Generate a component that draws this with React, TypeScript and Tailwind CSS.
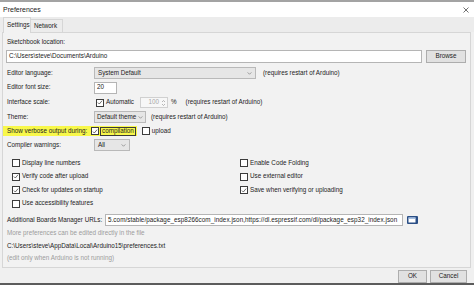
import React from "react";

function Box({ checked }: { checked?: boolean }) {
  return (
    <span className="w-[8px] h-[8px] border border-[#3c3c3c] bg-white flex items-center justify-center shrink-0">
      {checked && (
        <svg viewBox="0 0 8 8" className="w-[7px] h-[7px]">
          <path d="M1.2 4.1 L3.1 6 L6.8 1.5" fill="none" stroke="#2a2a2a" strokeWidth="0.9" />
        </svg>
      )}
    </span>
  );
}

function Chevron() {
  return (
    <svg viewBox="0 0 6 4" className="w-[5px] h-[3px] shrink-0">
      <path d="M0.5 0.5 L3 3 L5.5 0.5" fill="none" stroke="#6b6b6b" strokeWidth="0.8" />
    </svg>
  );
}

function Check({ label, checked }: { label: string; checked?: boolean }) {
  return (
    <div className="flex items-center gap-[2px]">
      <Box checked={checked} />
      <span>{label}</span>
    </div>
  );
}

export default function App() {
  return (
    <div className="w-[474px] h-[285px] overflow-hidden whitespace-nowrap bg-[#f0f0f0] flex flex-col font-['Liberation_Sans',Arial,sans-serif] text-[6.3px] leading-none text-[#222]">
      <div className="h-[2px] bg-[#a3a3a3]" />

      {/* title bar */}
      <div className="h-[15px] bg-white flex items-center justify-between pl-[3px] pr-[5px]">
        <span className="text-[7px]">Preferences</span>
        <svg viewBox="0 0 6 6" className="w-[6px] h-[6px]">
          <path d="M0.5 0.5 L5.5 5.5 M5.5 0.5 L0.5 5.5" stroke="#333" strokeWidth="0.7" />
        </svg>
      </div>

      {/* tabs */}
      <div className="h-[15px] flex items-end pl-[3px] bg-[#ececec]">
        <div className="relative z-10 -mb-[1px] h-[16px] w-[28px] bg-[#f2f2f2] border-l border-t border-r border-[#d6d6d6] flex items-center pl-[3px]">
          Settings
        </div>
        <div className="h-[13px] w-[32px] bg-[#ececec] border-t border-r border-[#d6d6d6] flex items-center pl-[3px]">
          Network
        </div>
      </div>

      {/* panel */}
      <div className="h-[236px] ml-[2px] mr-[3px] bg-[#f2f2f2] border border-[#d6d6d6] flex flex-col pl-[4px] pr-[4px]">
        <div className="mt-[4px] h-[10px] flex items-center">Sketchbook location:</div>
        <div className="mt-[3px] h-[13px] flex gap-[4px]">
          <div className="flex-1 -ml-[1px] bg-white border border-[#b5b5b5] flex items-center pl-[2px]">
            C:\Users\steve\Documents\Arduino
          </div>
          <div className="w-[40px] bg-[#e1e1e1] border border-[#adadad] flex items-center justify-center">
            Browse
          </div>
        </div>

        <div className="mt-[3px] h-[14px] flex items-center">
          <span className="w-[87px] shrink-0">Editor language:</span>
          <div className="w-[162px] h-[12px] bg-[#e6e6e6] border border-[#b9b9b9] flex items-center justify-between pl-[3px] pr-[3px]">
            <span>System Default</span>
            <Chevron />
          </div>
          <span className="ml-[7px]">(requires restart of Arduino)</span>
        </div>

        <div className="h-[15px] flex items-center">
          <span className="w-[87px] shrink-0">Editor font size:</span>
          <div className="w-[23px] h-[12px] bg-white border border-[#b5b5b5] flex items-center pl-[2px]">20</div>
        </div>

        <div className="h-[15px] flex items-center">
          <span className="w-[87px] shrink-0">Interface scale:</span>
          <span className="ml-[2px]">
            <Box checked />
          </span>
          <span className="ml-[2px]">Automatic</span>
          <div className="ml-[6px] w-[28px] h-[11px] bg-[#f7f7f7] border border-[#d0d0d0] flex items-center justify-end gap-[2px] pr-[1px] text-[#a8a8a8]">
            <span>100</span>
            <svg viewBox="0 0 5 8" className="w-[5px] h-[8px]">
              <path d="M1 3 L2.5 1.5 L4 3 M1 5 L2.5 6.5 L4 5" fill="none" stroke="#9a9a9a" strokeWidth="0.7" />
            </svg>
          </div>
          <span className="ml-[3px]">%</span>
          <span className="ml-[9px]">(requires restart of Arduino)</span>
        </div>

        <div className="h-[14px] flex items-center">
          <span className="w-[87px] shrink-0">Theme:</span>
          <div className="w-[52px] h-[12px] bg-[#e6e6e6] border border-[#b9b9b9] flex items-center justify-between pl-[2px] pr-[2px]">
            <span>Default theme</span>
            <Chevron />
          </div>
          <span className="ml-[5px]">(requires restart of Arduino)</span>
        </div>

        <div className="h-[14px] flex items-center">
          <div className="-ml-[4px] pl-[4px] pr-[1px] h-[10px] bg-[#f8f84a] flex items-center">
            <span className="w-[84px] shrink-0">Show verbose output during:</span>
            <Box checked />
            <span className="ml-[1px] h-[9px] border border-[#3a3a3a] px-[1px] flex items-center">compilation</span>
          </div>
          <span className="ml-[5px]">
            <Box />
          </span>
          <span className="ml-[2px]">upload</span>
        </div>

        <div className="h-[14px] flex items-center">
          <span className="w-[87px] shrink-0">Compiler warnings:</span>
          <div className="w-[36px] h-[12px] bg-[#e6e6e6] border border-[#b9b9b9] flex items-center justify-between pl-[3px] pr-[3px]">
            <span>All</span>
            <Chevron />
          </div>
        </div>

        <div className="mt-[4px] pl-[5px] grid grid-cols-[228px_1fr] grid-rows-[14px_13px_14px_13px] items-center">
          <Check label="Display line numbers" />
          <Check label="Enable Code Folding" />
          <Check label="Verify code after upload" checked />
          <Check label="Use external editor" />
          <Check label="Check for updates on startup" checked />
          <Check label="Save when verifying or uploading" checked />
          <Check label="Use accessibility features" />
        </div>

        <div className="mt-[3px] h-[14px] flex items-center">
          <span className="w-[98px] shrink-0">Additional Boards Manager URLs:</span>
          <div className="w-[298px] shrink-0 h-[12px] bg-white border border-[#b5b5b5] flex items-center pl-[2px] tracking-[0.06px] overflow-hidden">
            5.com/stable/package_esp8266com_index.json,https://dl.espressif.com/dl/package_esp32_index.json
          </div>
          <svg viewBox="0 0 11 8" className="ml-[4px] w-[11px] h-[8px] shrink-0">
            <rect x="0" y="0" width="11" height="8" rx="1" fill="#2b4f86" />
            <rect x="1.5" y="1.5" width="7" height="5" fill="#ffffff" />
            <rect x="1.5" y="1.5" width="7" height="1.3" fill="#8fb0dc" />
          </svg>
        </div>

        <div className="h-[13px] flex items-center text-[#9c9c9c]">More preferences can be edited directly in the file</div>
        <div className="h-[13px] flex items-center">C:\Users\steve\AppData\Local\Arduino15\preferences.txt</div>
        <div className="h-[11px] flex items-center text-[#9c9c9c]">(edit only when Arduino is not running)</div>
      </div>

      {/* buttons */}
      <div className="h-[15px] flex items-end justify-end gap-[3px] pr-[7px]">
        <div className="w-[29px] h-[13px] bg-[#e1e1e1] border border-[#adadad] flex items-center justify-center">OK</div>
        <div className="w-[37px] h-[13px] bg-[#e1e1e1] border border-[#adadad] flex items-center justify-center">Cancel</div>
      </div>
      <div className="h-[2px] bg-[#5c5c5c]" />
    </div>
  );
}
